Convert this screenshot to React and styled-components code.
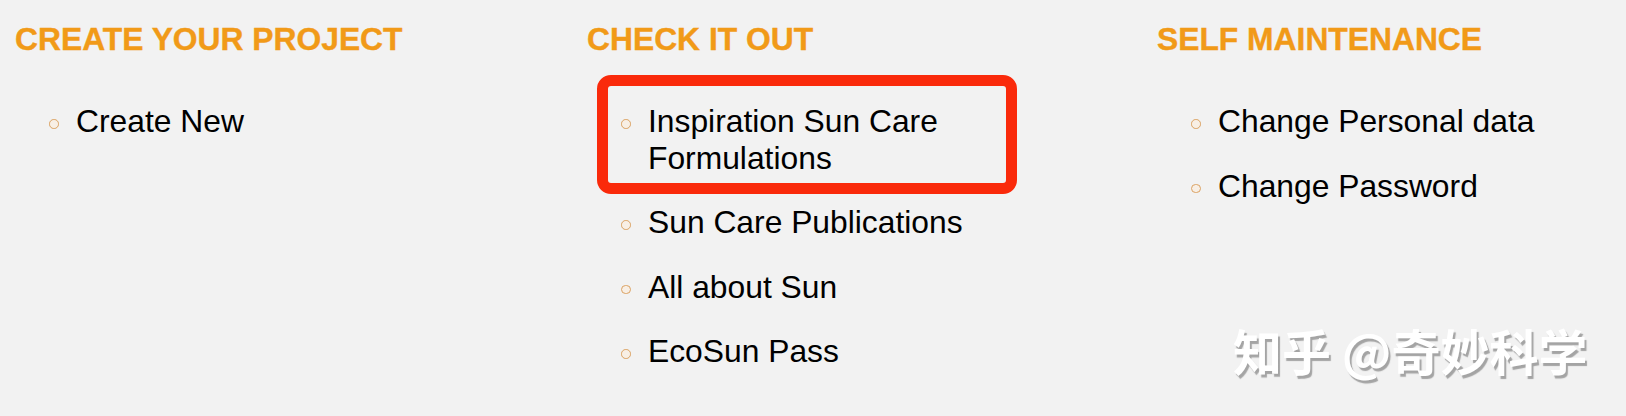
import React from "react";
import styled, { createGlobalStyle } from "styled-components";

const GlobalStyle = createGlobalStyle`
  html, body {
    margin: 0;
    padding: 0;
    background: #f2f2f2;
  }
  body {
    font-family: "Liberation Sans", Arial, Helvetica, sans-serif;
    color: #000;
  }
`;

const Page = styled.div`
  position: relative;
  box-sizing: border-box;
  height: 416px;
  padding: 21px 0 0 15px;
  display: grid;
  grid-template-columns: 572px 570px 1fr;
  align-items: start;
  overflow: hidden;
`;

const Column = styled.section`
  display: flex;
  flex-direction: column;
`;

const Heading = styled.h2`
  margin: 0;
  font-size: 31.8px;
  line-height: 36px;
  font-weight: 700;
  color: #f19a18;
  -webkit-text-stroke: 0.4px #f19a18;
  white-space: nowrap;
`;

const List = styled.ul`
  list-style: none;
  margin: 46.3px 0 0;
  padding: 0 0 0 61px;
  display: flex;
  flex-direction: column;
  gap: 28px;
`;

const Item = styled.li`
  position: relative;
  max-width: 380px;
  font-size: 31.8px;
  line-height: 36.5px;
  color: #000;

  &::before {
    content: "";
    position: absolute;
    left: -27px;
    top: 16px;
    width: 7.5px;
    height: 7.5px;
    border-radius: 50%;
    border: 1.2px solid #dba262;
    background: #f8efe5;
  }
`;

const Highlight = styled.span`
  position: absolute;
  left: -51px;
  top: -28.5px;
  width: 420px;
  height: 119px;
  box-sizing: border-box;
  border: 11.5px solid #fa2a0b;
  border-radius: 14px;
  pointer-events: none;
`;

const Watermark = styled.div`
  position: absolute;
  left: 1233px;
  top: 325px;
  font-family: "Noto Sans CJK SC", "Noto Sans", sans-serif;
  font-size: 49px;
  line-height: 1;
  font-weight: 700;
  color: #ffffff;
  text-shadow: 2px 3px 1px #a4a4a4;
  white-space: nowrap;
`;

const columns = [
  { title: "CREATE YOUR PROJECT", items: ["Create New"] },
  {
    title: "CHECK IT OUT",
    items: [
      "Inspiration Sun Care Formulations",
      "Sun Care Publications",
      "All about Sun",
      "EcoSun Pass",
    ],
    highlight: 0,
  },
  {
    title: "SELF MAINTENANCE",
    items: ["Change Personal data", "Change Password"],
  },
];

export default function App() {
  return (
    <>
      <GlobalStyle />
      <Page>
        {columns.map((col) => (
          <Column key={col.title}>
            <Heading>{col.title}</Heading>
            <List>
              {col.items.map((it, i) => (
                <Item key={it}>
                  {it}
                  {col.highlight === i && <Highlight />}
                </Item>
              ))}
            </List>
          </Column>
        ))}
        <Watermark>知乎 @奇妙科学</Watermark>
      </Page>
    </>
  );
}
